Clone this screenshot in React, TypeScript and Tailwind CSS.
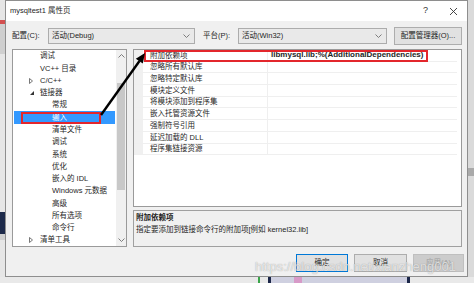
import React from "react";

type TreeItem = { label: string; level: 1 | 2; arrow?: "closed" | "open"; selected?: boolean };

const treeItems: TreeItem[] = [
  { label: "调试", level: 1 },
  { label: "VC++ 目录", level: 1 },
  { label: "C/C++", level: 1, arrow: "closed" },
  { label: "链接器", level: 1, arrow: "open" },
  { label: "常规", level: 2 },
  { label: "输入", level: 2, selected: true },
  { label: "清单文件", level: 2 },
  { label: "调试", level: 2 },
  { label: "系统", level: 2 },
  { label: "优化", level: 2 },
  { label: "嵌入的 IDL", level: 2 },
  { label: "Windows 元数据", level: 2 },
  { label: "高级", level: 2 },
  { label: "所有选项", level: 2 },
  { label: "命令行", level: 2 },
  { label: "清单工具", level: 1, arrow: "closed" },
];

const props = [
  { name: "附加依赖项", value: "libmysql.lib;%(AdditionalDependencies)" },
  { name: "忽略所有默认库", value: "" },
  { name: "忽略特定默认库", value: "" },
  { name: "模块定义文件", value: "" },
  { name: "将模块添加到程序集", value: "" },
  { name: "嵌入托管资源文件", value: "" },
  { name: "强制符号引用", value: "" },
  { name: "延迟加载的 DLL", value: "" },
  { name: "程序集链接资源", value: "" },
];

const Chevron = ({ up = false }: { up?: boolean }) => (
  <svg width="7" height="4" viewBox="0 0 7 4">
    <polyline
      points={up ? "0.5,3.5 3.5,0.5 6.5,3.5" : "0.5,0.5 3.5,3.5 6.5,0.5"}
      fill="none"
      stroke="#707070"
      strokeWidth="0.9"
    />
  </svg>
);

function Combo({ text, width }: { text: string; width: string }) {
  return (
    <div className={`${width} h-[16px] flex items-center justify-between border border-[#acacac] bg-[#e9e9e9] pl-[3px] pr-[4px]`}>
      <span className="text-[7.5px]">{text}</span>
      <Chevron />
    </div>
  );
}

function TreeRow({ item }: { item: TreeItem }) {
  return (
    <div
      className={`relative flex items-center h-[12.27px] shrink-0 ${item.level === 1 ? "pl-[15px]" : "pl-[38px]"} ${
        item.selected ? "bg-[#3399ff] text-white" : ""
      }`}
    >
      {item.level === 1 && (
        <span className="w-[11px] flex items-center">
          {item.arrow === "closed" && (
            <svg width="4" height="6" viewBox="0 0 4 6">
              <polygon points="0.5,0.5 3.5,3 0.5,5.5" fill="none" stroke="#555" strokeWidth="0.8" />
            </svg>
          )}
          {item.arrow === "open" && (
            <svg width="4" height="4" viewBox="0 0 4 4" className="ml-[1px]">
              <polygon points="4,0 4,4 0,4" fill="#333" />
            </svg>
          )}
        </span>
      )}
      <span className="text-[7.5px] leading-none">{item.label}</span>
      {item.selected && (
        <div className="absolute left-[7px] top-[1px] w-[80px] h-[12px] border-2 border-[#e3262c]" />
      )}
    </div>
  );
}

export default function App() {
  return (
    <div className="relative w-[474px] h-[283px] overflow-hidden flex flex-col bg-[#e2e2e2] text-[#1f1f1f] font-['Liberation_Sans','Noto_Sans_CJK_SC',sans-serif]">
      <div className="flex h-[277px]">
        {/* background window, left */}
        <div className="w-[5px] flex flex-col bg-[#e6e6e6]">
          <div className="h-[20px]" />
          <div className="h-[4px] bg-[#d35050]" />
          <div className="h-[30px] bg-[#cfcfcf]" />
          <div className="h-[158px]" />
          <div className="h-[22px] bg-[#1d2a4a]" />
          <div className="h-[6px] bg-[#d0d0d0]" />
        </div>

        {/* dialog */}
        <div className="w-[463px] flex flex-col border border-[#8e8e8e] bg-[#f0f0f0]">
          <div className="h-[20px] flex items-center bg-white pl-[4px] pr-[9px]">
            <span className="text-[7.5px] flex-1">mysqltest1 属性页</span>
            <span className="text-[9px] text-[#333] mr-[21px]">?</span>
            <svg width="9" height="9" viewBox="0 0 9 9">
              <path d="M1 1 L8 8 M8 1 L1 8" stroke="#333" strokeWidth="0.9" />
            </svg>
          </div>

          <div className="mt-[6px] h-[18px] flex items-center pl-[6px]">
            <span className="w-[36px] text-[7.5px]">配置(C):</span>
            <Combo text="活动(Debug)" width="w-[147px]" />
            <span className="ml-[8px] w-[35px] text-[7.5px]">平台(P):</span>
            <Combo text="活动(Win32)" width="w-[149px]" />
            <div className="ml-[7px] w-[68px] h-[18px] flex items-center justify-center border border-[#adadad] bg-[#e1e1e1] text-[7.5px]">
              配置管理器(O)...
            </div>
          </div>

          <div className="mt-[4px] h-[198px] flex pl-[6px]">
            {/* tree */}
            <div className="w-[115px] flex border border-[#9a9a9a] bg-white">
              <div className="flex-1 flex flex-col px-[1px] overflow-hidden">
                {treeItems.map((item, i) => (
                  <TreeRow key={i} item={item} />
                ))}
              </div>
              <div className="w-[10px] flex flex-col bg-[#f0f0f0]">
                <div className="h-[12px] flex items-center justify-center">
                  <Chevron up />
                </div>
                <div className="flex-1 pt-[21px] px-[1px]">
                  <div className="h-[107px] bg-[#c8c8c8]" />
                </div>
                <div className="h-[12px] flex items-center justify-center">
                  <Chevron />
                </div>
              </div>
            </div>

            {/* right side */}
            <div className="ml-[6px] w-[329px] flex flex-col">
              <div className="h-[158px] border border-[#9a9a9a] bg-white pr-[4px]">
                {props.map((p, i) => (
                  <div key={i} className="relative flex h-[11.7px] border-b border-[#efefef]">
                    <div className="w-[9px] bg-[#f0f0f0]" />
                    <div className="w-[125px] pl-[7px] flex items-center border-r border-[#efefef] text-[7.5px]">
                      {p.name}
                    </div>
                    <div className="flex-1 pl-[3px] flex items-center text-[8px] font-bold">{p.value}</div>
                    {i === 0 && (
                      <div className="absolute left-[10px] top-0 w-[284px] h-[12px] border-2 border-[#e3262c]" />
                    )}
                  </div>
                ))}
              </div>
              <div className="mt-[3px] h-[37px] border border-[#a0a0a0] bg-[#f0f0f0] pl-[2px] pt-[1px] flex flex-col">
                <span className="h-[12px] flex items-center text-[7.5px] font-bold">附加依赖项</span>
                <span className="h-[12px] flex items-center text-[7.5px]">
                  指定要添加到链接命令行的附加项[例如 kernel32.lib]
                </span>
              </div>
            </div>
          </div>

          <div className="mt-[7px] h-[18px] flex justify-end gap-[6px] pr-[3px]">
            <div className="w-[52px] flex items-center justify-center border border-[#0078d7] bg-[#e1e1e1] text-[7.5px]">
              确定
            </div>
            <div className="w-[53px] flex items-center justify-center border border-[#adadad] bg-[#e1e1e1] text-[7.5px]">
              取消
            </div>
            <div className="w-[51px] flex items-center justify-center border border-[#bfbfbf] bg-[#cccccc] text-[#a0a0a0] text-[7.5px]">
              应用(A)
            </div>
          </div>
        </div>

        {/* background window, right */}
        <div className="w-[6px] flex flex-col bg-[#dadada]">
          <div className="h-[168px]" />
          <div className="h-[8px] bg-[#a9a9a9]" />
        </div>
      </div>

      {/* background, bottom */}
      <div className="h-[6px] flex bg-[#e9e9e9]">
        <div className="w-[258px]" />
        <div className="w-[2px] bg-[#3aa54a]" />
        <div className="w-[8px]" />
        <div className="w-[3px] bg-[#1b2648]" />
        <div className="w-[136px] flex bg-[#cfd0e0]">
          <div className="ml-[23px] w-[8px] bg-[#d79ac8]" />
        </div>
        <div className="w-[3px] bg-[#1b2648]" />
      </div>

      {/* annotation arrow */}
      <svg className="absolute left-0 top-0 pointer-events-none" width="474" height="283" viewBox="0 0 474 283">
        <line x1="101" y1="115" x2="139.5" y2="61" stroke="#000" strokeWidth="2.4" />
        <polygon points="145,53 142.8,63.6 135.8,58.8" fill="#000" />
      </svg>

      {/* watermark */}
      <div className="absolute left-[255px] top-[257px] whitespace-nowrap text-[13px] text-white/70 [text-shadow:0_0_1px_rgba(90,90,90,0.6)]">
        https://blog.csdn.net/xianzheng001
      </div>
    </div>
  );
}
